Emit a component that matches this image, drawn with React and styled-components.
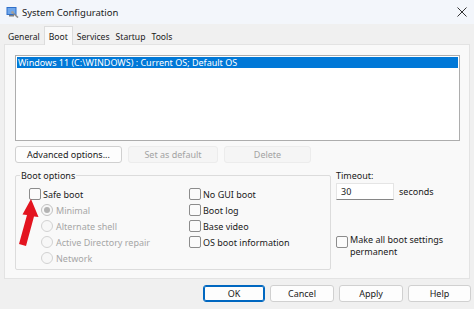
import React from 'react';
import styled, { createGlobalStyle } from 'styled-components';

const GlobalStyle = createGlobalStyle`
  html, body { margin: 0; padding: 0; }
  body {
    background: #f0f0f0;
    font-family: "Noto Sans", "Open Sans", sans-serif;
    font-size: 9px;
    color: #1a1a1a;
  }
`;

const Window = styled.div`
  position: relative;
  width: 474px;
  height: 309px;
  display: flex;
  flex-direction: column;
  background: #f0f0f0;
  overflow: hidden;
`;

const TitleBar = styled.div`
  height: 24px;
  display: flex;
  align-items: center;
  padding: 0 7px 0 6px;
  background: #f3f6fb;
  font-size: 9.5px;
  gap: 3px;
`;

const Title = styled.span`
  flex: 1;
  color: #1a1a1a;
`;

const TabStrip = styled.div`
  height: 20px;
  display: flex;
  align-items: flex-end;
  padding-left: 5px;
  font-size: 8.6px;
`;

const Tab = styled.div`
  height: ${p => (p.$active ? '19px' : '17px')};
  box-sizing: border-box;
  padding: 2px ${p => (p.$active ? '4px' : '2px')} 0;
  display: flex;
  align-items: center;
  background: ${p => (p.$active ? '#f9f9f9' : 'transparent')};
  border: 1px solid ${p => (p.$active ? '#dcdcdc' : 'transparent')};
  border-bottom: none;
  margin: 0 ${p => (p.$active ? '1px' : '0')} ${p => (p.$active ? '-1px' : '0')};
  position: relative;
  z-index: 1;
`;

const Page = styled.div`
  margin: 0 4px;
  height: 235px;
  background: #f9f9f9;
  border: 1px solid #e3e3e3;
  box-sizing: border-box;
  padding: 10px 0 0 10px;
  display: flex;
  flex-direction: column;
`;

const ListBox = styled.div`
  width: 445px;
  height: 86px;
  box-sizing: border-box;
  border: 1px solid #adadad;
  background: #fff;
  padding: 1px;
`;

const ListItem = styled.div`
  height: 11px;
  line-height: 11px;
  padding-left: 1px;
  background: ${p => (p.$selected ? '#0078d7' : 'transparent')};
  color: ${p => (p.$selected ? '#fff' : '#1a1a1a')};
  white-space: nowrap;
`;

const ButtonRow = styled.div`
  display: flex;
  gap: 6px;
  margin-top: 5px;
`;

const Button = styled.button`
  width: ${p => p.$w}px;
  height: 17px;
  padding: 0;
  font: inherit;
  font-size: 9px;
  border-radius: 3px;
  border: 1px solid ${p => (p.$focus ? '#0067c0' : p.disabled ? '#ececec' : '#d0d0d0')};
  box-shadow: ${p => (p.$focus ? 'inset 0 0 0 1px #0067c0' : 'none')};
  background: ${p => (p.disabled ? '#f5f5f5' : '#fdfdfd')};
  color: ${p => (p.disabled ? '#a3a3a3' : '#1a1a1a')};
`;

const Lower = styled.div`
  display: flex;
  gap: 5px;
  margin-top: 6px;
`;

const GroupBox = styled.fieldset`
  width: 316px;
  height: 101px;
  box-sizing: border-box;
  margin: 0;
  border: 1px solid #dcdcdc;
  border-radius: 2px;
  padding: 4px 0 0 13px;
  display: grid;
  grid-template-columns: 160px 1fr;
  align-content: start;
`;

const Legend = styled.legend`
  padding: 0 1px;
  margin-left: -9px;
  font-size: 9px;
`;

const Column = styled.div`
  display: flex;
  flex-direction: column;
`;

const Row = styled.label`
  height: 16px;
  display: flex;
  align-items: center;
  gap: 2px;
  padding-left: ${p => p.$indent || 0}px;
  color: ${p => (p.$disabled ? '#a6a6a6' : '#1a1a1a')};
  white-space: nowrap;
`;

const Check = styled.span`
  width: 10px;
  height: 10px;
  flex-shrink: 0;
  border: 1px solid #8c8c8c;
  border-radius: 2px;
  background: #fbfbfb;
`;

const Radio = styled.span`
  width: 10px;
  height: 10px;
  flex-shrink: 0;
  border-radius: 50%;
  border: 1px solid ${p => (p.$on ? '#c2c2c2' : '#d2d2d2')};
  background: #f7f7f7;
  display: flex;
  align-items: center;
  justify-content: center;
  margin-right: 1px;
  &::after {
    content: '';
    display: ${p => (p.$on ? 'block' : 'none')};
    width: 6px;
    height: 6px;
    border-radius: 50%;
    background: #b3b3b3;
  }
`;

const Side = styled.div`
  display: flex;
  flex-direction: column;
`;

const FieldLabel = styled.div`
  height: 13px;
  line-height: 13px;
`;

const TimeoutRow = styled.div`
  display: flex;
  align-items: center;
  gap: 5px;
  margin-top: 1px;
`;

const Input = styled.div`
  width: 58px;
  height: 17px;
  box-sizing: border-box;
  background: #fff;
  border: 1px solid #e5e5e5;
  border-bottom: 1px solid #868686;
  padding-left: 4px;
  line-height: 15px;
`;

const Permanent = styled.label`
  display: flex;
  align-items: flex-start;
  gap: 2px;
  margin-top: 36px;
  line-height: 12px;
  & > span:last-child {
    margin-top: -2px;
  }
`;

const Footer = styled.div`
  flex: 1;
  display: flex;
  justify-content: flex-end;
  align-items: flex-start;
  gap: 5px;
  padding: 6px 3px 0 0;
`;

const Arrow = styled.svg`
  position: absolute;
  left: 14px;
  top: 196px;
  pointer-events: none;
`;

const AppIcon = () => (
  <svg width="13" height="12" viewBox="0 0 13 12">
    <rect x="0.5" y="1" width="10" height="8" fill="#2f6fc9" />
    <rect x="1.5" y="2" width="8" height="6" fill="#6fa6ea" />
    <rect x="3" y="9" width="5" height="1.5" fill="#7b7b7b" />
    <path d="M6 6 L12 11.5" stroke="#8a8a8a" strokeWidth="1.6" />
    <circle cx="6.5" cy="6.5" r="1.4" fill="#a0a0a0" />
  </svg>
);

const CloseIcon = () => (
  <svg width="10" height="10" viewBox="0 0 10 10">
    <path d="M0.5 0.5 L9.5 9.5 M9.5 0.5 L0.5 9.5" stroke="#333" strokeWidth="1" />
  </svg>
);

export default function App() {
  return (
    <>
      <GlobalStyle />
      <Window>
        <TitleBar>
          <AppIcon />
          <Title>System Configuration</Title>
          <CloseIcon />
        </TitleBar>

        <TabStrip>
          <Tab>General</Tab>
          <Tab $active>Boot</Tab>
          <Tab>Services</Tab>
          <Tab>Startup</Tab>
          <Tab>Tools</Tab>
        </TabStrip>

        <Page>
          <ListBox>
            <ListItem $selected>Windows 11 (C:\WINDOWS) : Current OS; Default OS</ListItem>
          </ListBox>

          <ButtonRow>
            <Button $w={107}>Advanced options...</Button>
            <Button $w={90} disabled>Set as default</Button>
            <Button $w={87} disabled>Delete</Button>
          </ButtonRow>

          <Lower>
            <GroupBox>
              <Legend>Boot options</Legend>
              <Column>
                <Row><Check />Safe boot</Row>
                <Row $indent={12} $disabled><Radio $on />Minimal</Row>
                <Row $indent={12} $disabled><Radio />Alternate shell</Row>
                <Row $indent={12} $disabled><Radio />Active Directory repair</Row>
                <Row $indent={12} $disabled><Radio />Network</Row>
              </Column>
              <Column>
                <Row><Check />No GUI boot</Row>
                <Row><Check />Boot log</Row>
                <Row><Check />Base video</Row>
                <Row><Check />OS boot information</Row>
              </Column>
            </GroupBox>

            <Side>
              <FieldLabel>Timeout:</FieldLabel>
              <TimeoutRow>
                <Input>30</Input>
                <span>seconds</span>
              </TimeoutRow>
              <Permanent>
                <Check />
                <span>Make all boot settings<br />permanent</span>
              </Permanent>
            </Side>
          </Lower>
        </Page>

        <Footer>
          <Button $w={62} $focus>OK</Button>
          <Button $w={64}>Cancel</Button>
          <Button $w={64}>Apply</Button>
          <Button $w={63}>Help</Button>
        </Footer>

        <Arrow width="26" height="52" viewBox="0 0 26 52">
          <path
            d="M17 3 L24.5 21 L20 20.5 L12 50 L5 48 L13 19 L8.5 18.5 Z"
            fill="#e3141f"
          />
        </Arrow>
      </Window>
    </>
  );
}
